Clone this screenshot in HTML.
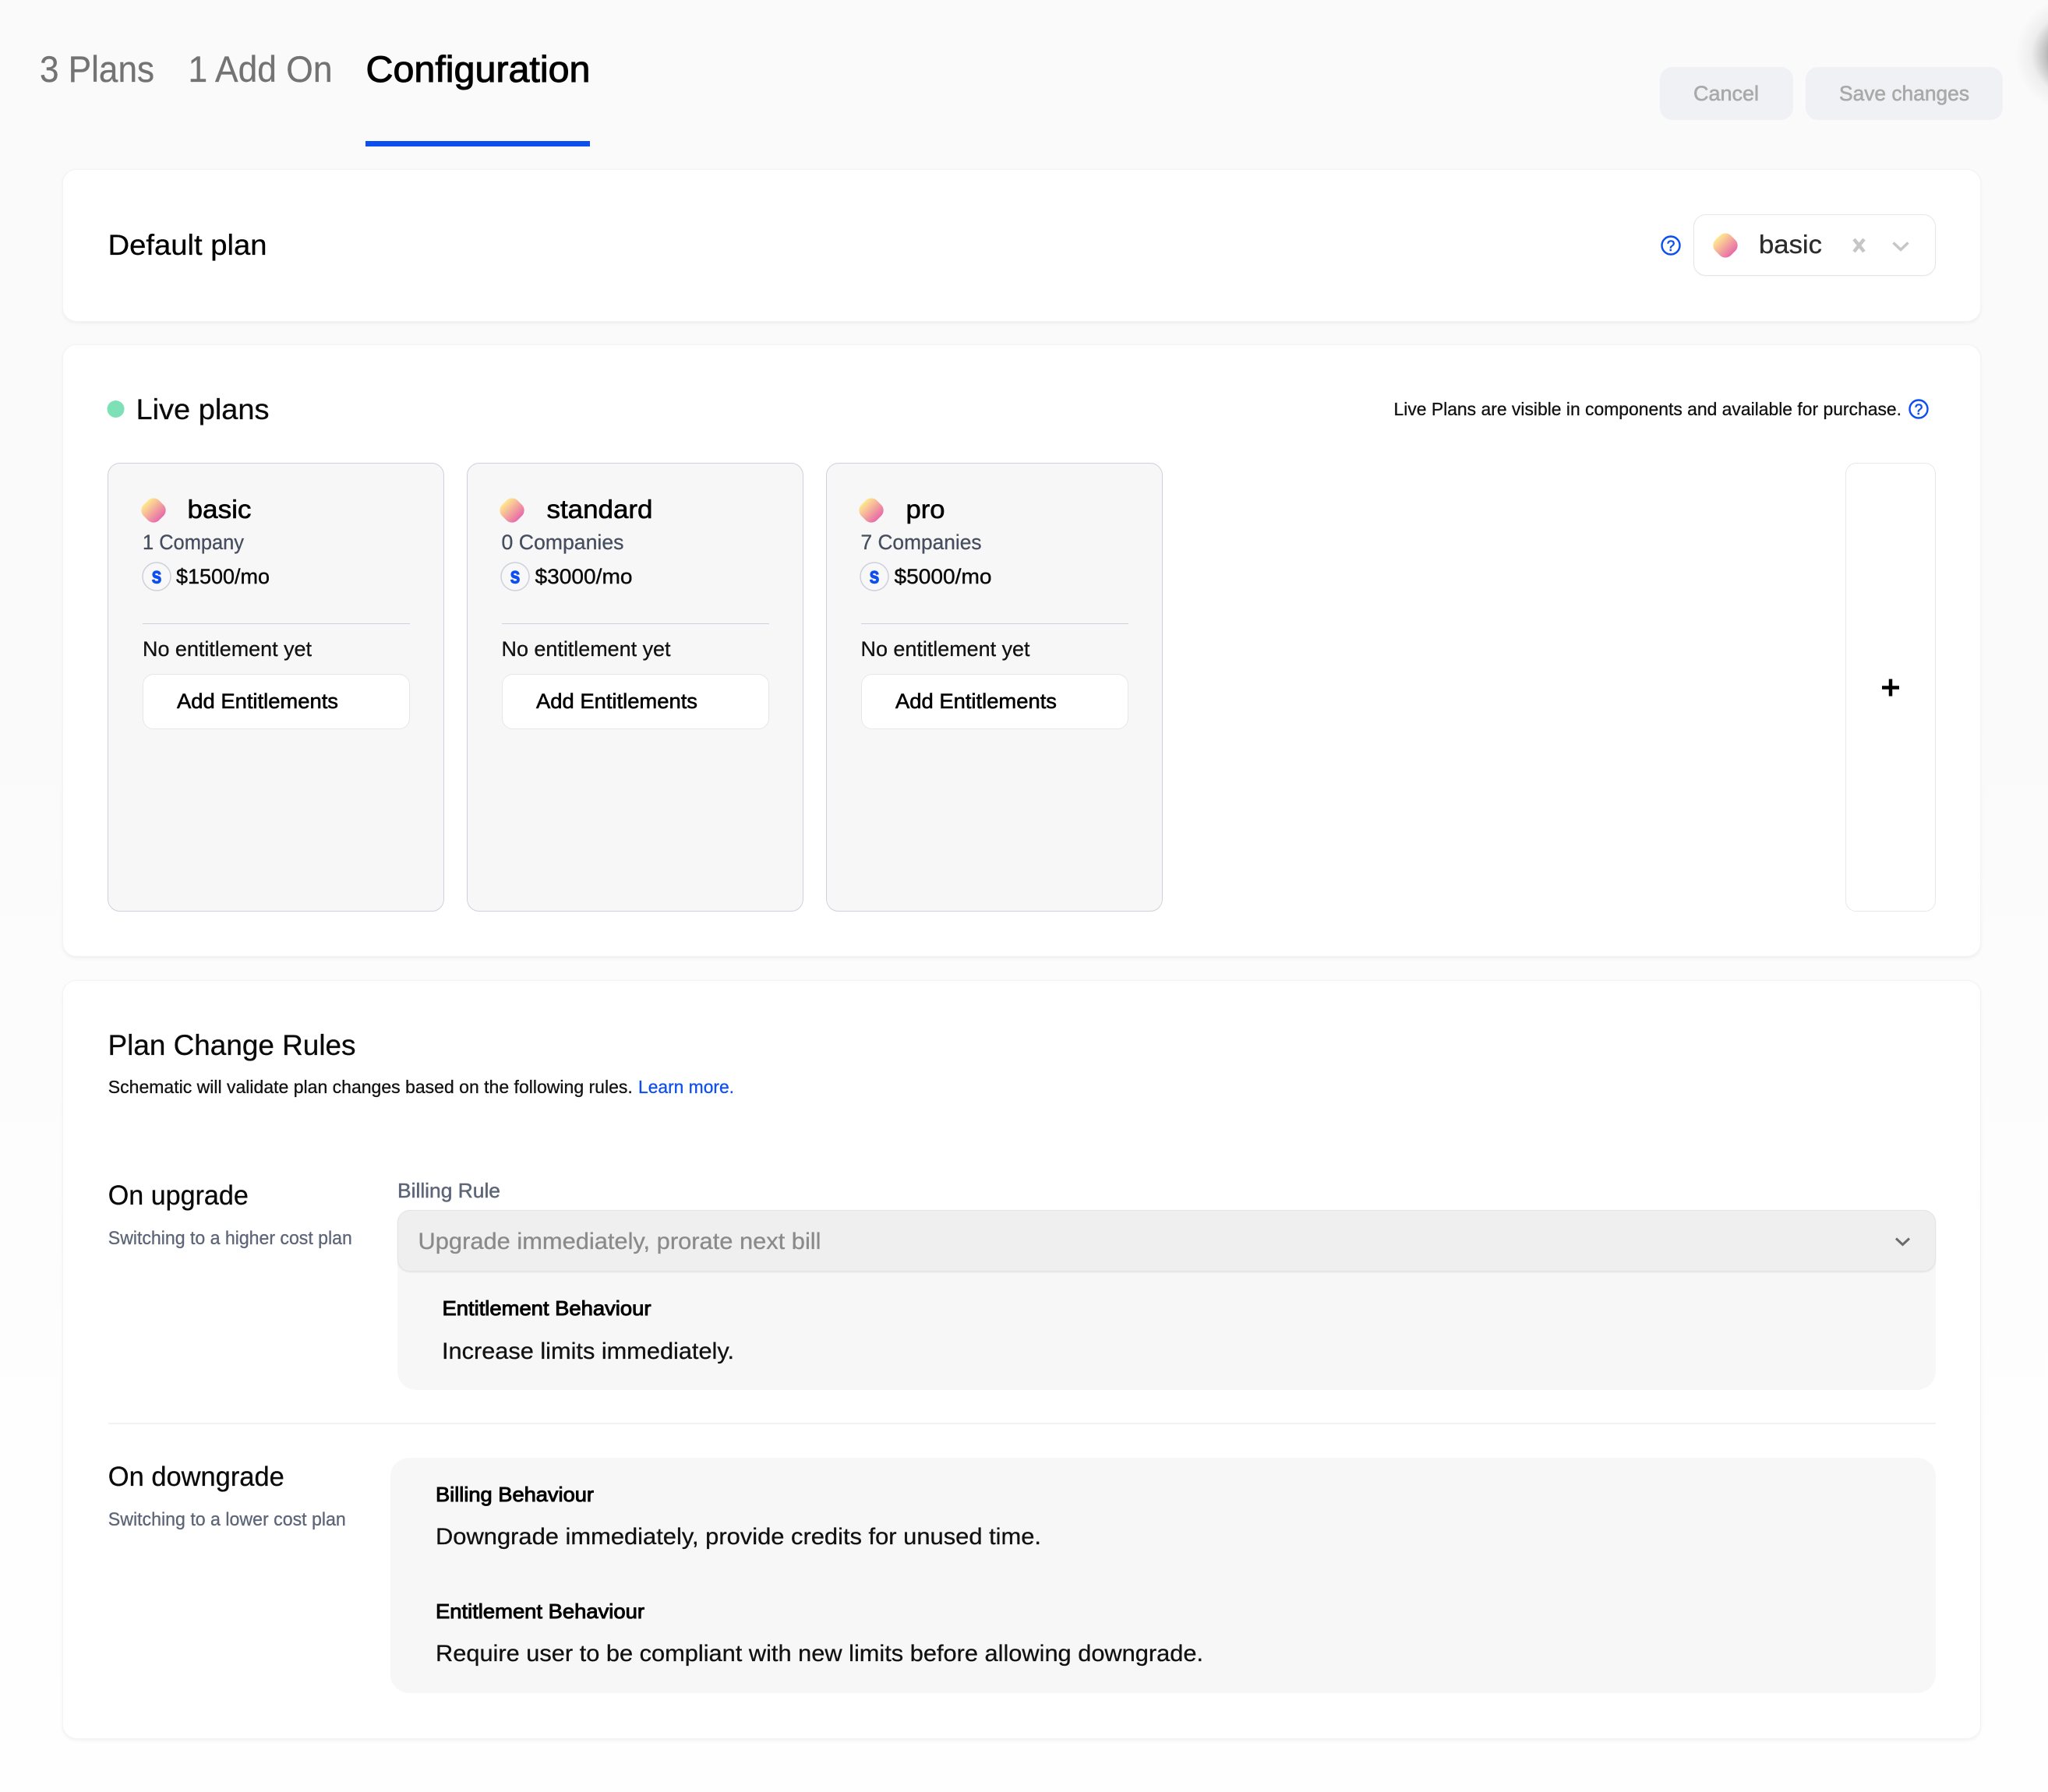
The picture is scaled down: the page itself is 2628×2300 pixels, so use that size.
<!DOCTYPE html>
<html lang="en">
<head>
<meta charset="utf-8">
<title>Configuration</title>
<style>
html,body{margin:0;padding:0;width:2628px;height:2300px;overflow:hidden;background:#fff}
#page{position:relative;width:2628px;height:2300px;overflow:hidden;background:linear-gradient(#fafafa 0,#fafafa 900px,#fdfdfd 1500px,#fefefe 2300px);font-family:"Liberation Sans",sans-serif}
.b{position:absolute;box-sizing:border-box}
.card{background:#fff;border:1px solid #f3f3f4;border-radius:18px;box-shadow:0 2px 5px rgba(0,0,0,.05)}
.plan{background:#f7f7f7;border:1.5px solid #ced1dc;border-radius:16px;top:594px;width:432px;height:576px}
.add{background:#fff;border:1.5px solid #e6e7ea;border-radius:14px;top:865px;width:343px;height:71px}
.btn{background:#f0f1f4;border-radius:16px;top:86px;height:68px}
.rule{background:#cfd2dc;height:1.5px;top:799.5px;width:343px}
svg{position:absolute;left:0;top:0}
text{font-family:"Liberation Sans",sans-serif;stroke-width:.3px;paint-order:stroke}
.m{stroke-width:.6px}
.s{stroke-width:.95px}
.t{stroke-width:1px}
</style>
</head>
<body>
<div id="page">
  <div class="b" style="left:2586px;top:-4px;width:148px;height:148px;background:radial-gradient(circle closest-side at 50% 50%,rgba(70,70,70,.7) 0,rgba(80,80,80,.6) 30%,rgba(110,110,110,.4) 48%,rgba(150,150,150,.12) 72%,rgba(180,180,180,0) 100%)"></div>

  <div class="b" style="left:469px;top:181px;width:288px;height:7px;background:#0d4ef0"></div>
  <div class="b btn" style="left:2130px;width:171px"></div>
  <div class="b btn" style="left:2317px;width:253px"></div>

  <div class="b card" style="left:80px;top:217px;width:2462px;height:196px"></div>
  <div class="b" style="left:2173px;top:275px;width:311px;height:79px;background:#fff;border:1.5px solid #e6e6e6;border-radius:16px;box-shadow:0 1px 2px rgba(0,0,0,.04)"></div>

  <div class="b card" style="left:80px;top:442px;width:2462px;height:786px"></div>
  <div class="b plan" style="left:138px"></div>
  <div class="b plan" style="left:599px"></div>
  <div class="b plan" style="left:1060px"></div>
  <div class="b" style="left:2368px;top:594px;width:116px;height:576px;background:#fff;border:1.5px solid #e8e8ea;border-radius:14px"></div>
  <div class="b rule" style="left:183px"></div>
  <div class="b rule" style="left:643.500px"></div>
  <div class="b rule" style="left:1104.500px"></div>
  <div class="b add" style="left:183px"></div>
  <div class="b add" style="left:643.500px"></div>
  <div class="b add" style="left:1104.500px"></div>

  <div class="b card" style="left:80px;top:1258px;width:2462px;height:974px"></div>
  <div class="b" style="left:510px;top:1600px;width:1974px;height:184px;background:#f7f7f7;border-radius:0 0 24px 24px"></div>
  <div class="b" style="left:510px;top:1553px;width:1974px;height:79px;background:#efefef;border:1px solid #e4e4e4;border-radius:16px;box-shadow:0 1px 2px rgba(0,0,0,.08)"></div>
  <div class="b" style="left:139px;top:1826px;width:2345px;height:2px;background:#f2f2f2"></div>
  <div class="b" style="left:501px;top:1871px;width:1983px;height:302px;background:#f7f7f7;border-radius:24px"></div>

  <svg width="2628" height="2300" viewBox="0 0 2628 2300" xmlns="http://www.w3.org/2000/svg">
    <defs>
      <linearGradient id="g" x1="0" y1="0.5" x2="1" y2="0.5">
        <stop offset="0" stop-color="#ffe88f"/>
        <stop offset="1" stop-color="#e86aa9"/>
      </linearGradient>
    </defs>

    <!-- Tabs -->
    <text x="51" y="105" font-size="47" fill="#737373" stroke="#737373" textLength="147" lengthAdjust="spacingAndGlyphs">3 Plans</text>
    <text x="241.500" y="105" font-size="47" fill="#737373" stroke="#737373" textLength="185" lengthAdjust="spacingAndGlyphs">1 Add On</text>
    <text class="t" x="469.500" y="105" font-size="47" fill="#000" stroke="#000" textLength="288" lengthAdjust="spacingAndGlyphs">Configuration</text>
    <text class="m" x="2173" y="129" font-size="27" fill="#a9a9a9" stroke="#a9a9a9" textLength="84" lengthAdjust="spacingAndGlyphs">Cancel</text>
    <text class="m" x="2360" y="129" font-size="27" fill="#a9a9a9" stroke="#a9a9a9" textLength="167" lengthAdjust="spacingAndGlyphs">Save changes</text>

    <!-- Default plan -->
    <text x="138.500" y="327" font-size="37" fill="#000" stroke="#000" textLength="204" lengthAdjust="spacingAndGlyphs">Default plan</text>
    <circle cx="2144" cy="315" r="11.500" fill="none" stroke="#0d4ef0" stroke-width="2.400"/>
    <text class="m" x="2144" y="322" font-size="19" fill="#0d4ef0" stroke="#0d4ef0" text-anchor="middle">?</text>
    <rect x="2200" y="301" width="28" height="28" rx="10" fill="url(#g)" transform="rotate(45 2214 315)"/>
    <text x="2257" y="325" font-size="33" fill="#2b2b2b" stroke="#2b2b2b" textLength="81" lengthAdjust="spacingAndGlyphs">basic</text>
    <path d="M2379 307L2392 323M2392 307L2379 323" fill="none" stroke="#c6c6c6" stroke-width="4.500"/>
    <path d="M2429.500 311.500L2439 320.500L2448.500 311.500" fill="none" stroke="#c6c6c6" stroke-width="3.500"/>

    <!-- Live plans -->
    <circle cx="148.500" cy="525" r="11" fill="#7de0b6"/>
    <text x="174.500" y="538" font-size="37" fill="#0a0a0a" stroke="#0a0a0a" textLength="171" lengthAdjust="spacingAndGlyphs">Live plans</text>
    <text x="1788.500" y="533" font-size="23.500" fill="#111" stroke="#111" textLength="651.500" lengthAdjust="spacingAndGlyphs">Live Plans are visible in components and available for purchase.</text>
    <circle cx="2462" cy="525" r="11.500" fill="none" stroke="#0d4ef0" stroke-width="2.400"/>
    <text class="m" x="2462" y="532" font-size="19" fill="#0d4ef0" stroke="#0d4ef0" text-anchor="middle">?</text>

    <!-- Plan card 1 -->
    <rect x="183" y="641" width="28" height="28" rx="10" fill="url(#g)" transform="rotate(45 197 655)"/>
    <text class="m" x="240.500" y="665" font-size="33" fill="#000" stroke="#000" textLength="82" lengthAdjust="spacingAndGlyphs">basic</text>
    <text x="183" y="705" font-size="27" fill="#454d5e" stroke="#454d5e" textLength="130" lengthAdjust="spacingAndGlyphs">1 Company</text>
    <circle cx="201" cy="740" r="18" fill="#f8f8f9" stroke="#ccd0dc" stroke-width="1.500"/>
    <text class="s" x="194.500" y="748.500" font-size="30" font-weight="700" fill="#0d4ef0" stroke="#0d4ef0" textLength="13" lengthAdjust="spacingAndGlyphs">s</text>
    <text class="m" x="226" y="749" font-size="27" fill="#0a0a0a" stroke="#0a0a0a" style="stroke-width:.4px" textLength="120" lengthAdjust="spacingAndGlyphs">$1500/mo</text>
    <text x="183" y="842" font-size="27" fill="#111" stroke="#111" textLength="217" lengthAdjust="spacingAndGlyphs">No entitlement yet</text>
    <text class="m" x="227" y="909" font-size="27" fill="#000" stroke="#000" textLength="207" lengthAdjust="spacingAndGlyphs">Add Entitlements</text>

    <!-- Plan card 2 -->
    <rect x="643" y="641" width="28" height="28" rx="10" fill="url(#g)" transform="rotate(45 657 655)"/>
    <text class="m" x="701.500" y="665" font-size="33" fill="#000" stroke="#000" textLength="136" lengthAdjust="spacingAndGlyphs">standard</text>
    <text x="643.500" y="705" font-size="27" fill="#454d5e" stroke="#454d5e" textLength="157" lengthAdjust="spacingAndGlyphs">0 Companies</text>
    <circle cx="661" cy="740" r="18" fill="#f8f8f9" stroke="#ccd0dc" stroke-width="1.500"/>
    <text class="s" x="654.500" y="748.500" font-size="30" font-weight="700" fill="#0d4ef0" stroke="#0d4ef0" textLength="13" lengthAdjust="spacingAndGlyphs">s</text>
    <text class="m" x="686.500" y="749" font-size="27" fill="#0a0a0a" stroke="#0a0a0a" style="stroke-width:.4px" textLength="125" lengthAdjust="spacingAndGlyphs">$3000/mo</text>
    <text x="643.500" y="842" font-size="27" fill="#111" stroke="#111" textLength="217" lengthAdjust="spacingAndGlyphs">No entitlement yet</text>
    <text class="m" x="688" y="909" font-size="27" fill="#000" stroke="#000" textLength="207" lengthAdjust="spacingAndGlyphs">Add Entitlements</text>

    <!-- Plan card 3 -->
    <rect x="1104" y="641" width="28" height="28" rx="10" fill="url(#g)" transform="rotate(45 1118 655)"/>
    <text class="m" x="1162.500" y="665" font-size="33" fill="#000" stroke="#000" textLength="50" lengthAdjust="spacingAndGlyphs">pro</text>
    <text x="1104.500" y="705" font-size="27" fill="#454d5e" stroke="#454d5e" textLength="155" lengthAdjust="spacingAndGlyphs">7 Companies</text>
    <circle cx="1122" cy="740" r="18" fill="#f8f8f9" stroke="#ccd0dc" stroke-width="1.500"/>
    <text class="s" x="1115.500" y="748.500" font-size="30" font-weight="700" fill="#0d4ef0" stroke="#0d4ef0" textLength="13" lengthAdjust="spacingAndGlyphs">s</text>
    <text class="m" x="1147.500" y="749" font-size="27" fill="#0a0a0a" stroke="#0a0a0a" style="stroke-width:.4px" textLength="125" lengthAdjust="spacingAndGlyphs">$5000/mo</text>
    <text x="1104.500" y="842" font-size="27" fill="#111" stroke="#111" textLength="217" lengthAdjust="spacingAndGlyphs">No entitlement yet</text>
    <text class="m" x="1149" y="909" font-size="27" fill="#000" stroke="#000" textLength="207" lengthAdjust="spacingAndGlyphs">Add Entitlements</text>

    <path d="M2415 882.500H2437M2426 871.500V893.500" fill="none" stroke="#000" stroke-width="4.500"/>

    <!-- Plan Change Rules -->
    <text x="138.500" y="1354" font-size="37" fill="#0a0a0a" stroke="#0a0a0a" textLength="318" lengthAdjust="spacingAndGlyphs">Plan Change Rules</text>
    <text x="138.800" y="1403" font-size="23.500" fill="#111" stroke="#111" textLength="673" lengthAdjust="spacingAndGlyphs">Schematic will validate plan changes based on the following rules.</text>
    <text x="819" y="1403" font-size="23.500" fill="#0d4ef0" stroke="#0d4ef0" textLength="123" lengthAdjust="spacingAndGlyphs">Learn more.</text>

    <text x="138.800" y="1546" font-size="35" fill="#0a0a0a" stroke="#0a0a0a" textLength="180" lengthAdjust="spacingAndGlyphs">On upgrade</text>
    <text x="138.800" y="1597" font-size="24" fill="#5d6578" stroke="#5d6578" textLength="313" lengthAdjust="spacingAndGlyphs">Switching to a higher cost plan</text>
    <text x="510" y="1537" font-size="26" fill="#5d6578" stroke="#5d6578" style="stroke-width:.45px" textLength="132" lengthAdjust="spacingAndGlyphs">Billing Rule</text>
    <text x="536.500" y="1603" font-size="30" fill="#8a8a8a" stroke="#8a8a8a" textLength="517" lengthAdjust="spacingAndGlyphs">Upgrade immediately, prorate next bill</text>
    <path d="M2433 1589.500L2441.500 1597.500L2450 1589.500" fill="none" stroke="#6b6b6b" stroke-width="3"/>
    <text class="s" x="567.500" y="1688" font-size="26" fill="#000" stroke="#000" textLength="268" lengthAdjust="spacingAndGlyphs">Entitlement Behaviour</text>
    <text x="567" y="1744" font-size="30" fill="#111" stroke="#111" textLength="375" lengthAdjust="spacingAndGlyphs">Increase limits immediately.</text>

    <text x="138.800" y="1907" font-size="35" fill="#0a0a0a" stroke="#0a0a0a" textLength="226" lengthAdjust="spacingAndGlyphs">On downgrade</text>
    <text x="138.800" y="1958" font-size="24" fill="#5d6578" stroke="#5d6578" textLength="305" lengthAdjust="spacingAndGlyphs">Switching to a lower cost plan</text>
    <text class="s" x="559" y="1927" font-size="26" fill="#000" stroke="#000" textLength="203" lengthAdjust="spacingAndGlyphs">Billing Behaviour</text>
    <text x="559" y="1982" font-size="30" fill="#111" stroke="#111" textLength="777" lengthAdjust="spacingAndGlyphs">Downgrade immediately, provide credits for unused time.</text>
    <text class="s" x="559" y="2077" font-size="26" fill="#000" stroke="#000" textLength="268" lengthAdjust="spacingAndGlyphs">Entitlement Behaviour</text>
    <text x="559" y="2132" font-size="30" fill="#111" stroke="#111" textLength="985" lengthAdjust="spacingAndGlyphs">Require user to be compliant with new limits before allowing downgrade.</text>
  </svg>
</div>
</body>
</html>
